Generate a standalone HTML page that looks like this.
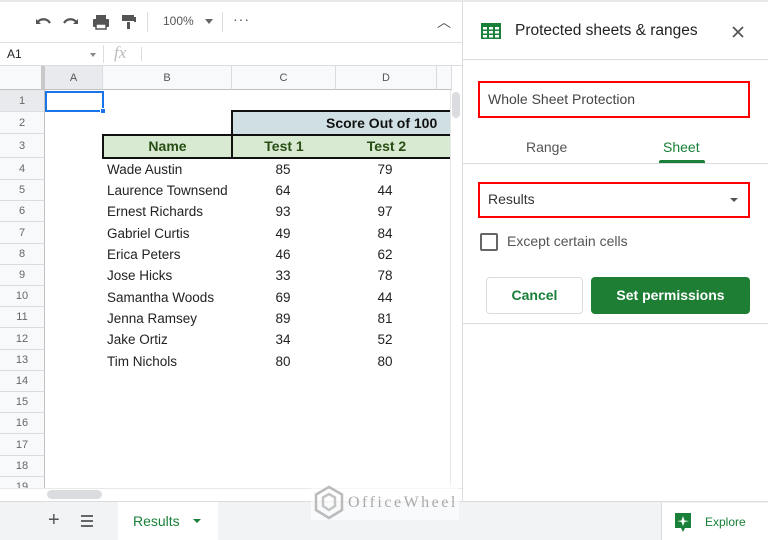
<!DOCTYPE html>
<html><head><style>
*{box-sizing:border-box;margin:0;padding:0}
body{width:768px;height:540px;overflow:hidden;background:#fff;font-family:"Liberation Sans",Arial,sans-serif;position:relative;color:#222}
.a{position:absolute}
.rh{position:absolute;left:0;width:45px;background:#f8f9fa;border-bottom:1px solid #dadce0;border-right:1px solid #c0c0c0;font-size:11px;color:#666;text-align:center}
.ch{position:absolute;top:66px;height:24px;border-right:1px solid #dadce0;border-bottom:1px solid #c0c0c0;background:#f8f9fa;font-size:11px;color:#555;text-align:center;line-height:24px}
.t{position:absolute;font-size:13.5px;color:#222}
.n{position:absolute;font-size:13.5px;width:60px;text-align:center}
</style></head><body>
<!-- toolbar -->
<div class="a" style="left:0;top:0;width:462px;height:43px;border-top:2px solid #e8e8e8;border-bottom:1px solid #e0e0e0"></div>
<svg class="a" style="left:34px;top:14px" width="110" height="16" viewBox="0 0 110 16">
<path d="M3 9 C6 4 13 4 16 9" stroke="#555" stroke-width="2.2" fill="none"/><path d="M2 5 L2 10 L7 10Z" fill="#555"/>
<path d="M30 9 C33 4 40 4 43 9" stroke="#555" stroke-width="2.2" fill="none"/><path d="M44 5 L44 10 L39 10Z" fill="#555"/>
<rect x="59" y="5" width="16" height="8" rx="1" fill="#555"/><rect x="62" y="1" width="10" height="4" fill="#555"/><rect x="62" y="10" width="10" height="5" fill="#fff" stroke="#555" stroke-width="1.5"/>
<rect x="88" y="1" width="12" height="6" fill="#555"/><rect x="100" y="3" width="2" height="5" fill="#555"/><rect x="93" y="8" width="3" height="7" fill="#555"/>
</svg>
<div class="a" style="left:147px;top:12px;width:1px;height:20px;background:#ddd"></div>
<div class="a" style="left:163px;top:14px;font-size:12px;color:#555">100%</div>
<div class="a" style="left:205px;top:19px;border:4px solid transparent;border-top:5px solid #666"></div>
<div class="a" style="left:222px;top:12px;width:1px;height:20px;background:#ddd"></div>
<div class="a" style="left:233px;top:11px;font-size:14px;color:#555;letter-spacing:1px">···</div>
<div class="a" style="left:437px;top:12px;font-size:14px;color:#555">︿</div>
<!-- formula bar -->
<div class="a" style="left:0;top:43px;width:462px;height:23px;border-bottom:1px solid #dadce0"></div>
<div class="a" style="left:7px;top:47px;font-size:12px;color:#222">A1</div>
<div class="a" style="left:90px;top:53px;border:3px solid transparent;border-top:4px solid #888"></div>
<div class="a" style="left:103px;top:45px;width:1px;height:18px;background:#ddd"></div>
<div class="a" style="left:114px;top:43px;font-size:17px;color:#bbb;font-style:italic;font-family:'Liberation Serif',serif">fx</div>
<div class="a" style="left:141px;top:47px;width:1px;height:14px;background:#ddd"></div>
<!-- column headers -->
<div class="ch" style="left:0;width:45px;border-right:4px solid #c8c8c8"></div>
<div class="ch" style="left:45px;width:58px;background:#e8eaed">A</div>
<div class="ch" style="left:103px;width:129px">B</div>
<div class="ch" style="left:232px;width:104px">C</div>
<div class="ch" style="left:336px;width:101px">D</div>
<div class="ch" style="left:437px;width:15px"></div>
<!-- row headers -->
<div class="rh" style="top:90px;height:22px;line-height:22px;background:#e8eaed">1</div>
<div class="rh" style="top:112px;height:22px;line-height:22px">2</div>
<div class="rh" style="top:134px;height:24px;line-height:24px">3</div>
<div class="rh" style="top:158px;height:22px;line-height:22px">4</div>
<div class="rh" style="top:180px;height:21px;line-height:21px">5</div>
<div class="rh" style="top:201px;height:21px;line-height:21px">6</div>
<div class="rh" style="top:222px;height:22px;line-height:22px">7</div>
<div class="rh" style="top:244px;height:21px;line-height:21px">8</div>
<div class="rh" style="top:265px;height:21px;line-height:21px">9</div>
<div class="rh" style="top:286px;height:21px;line-height:21px">10</div>
<div class="rh" style="top:307px;height:21px;line-height:21px">11</div>
<div class="rh" style="top:328px;height:22px;line-height:22px">12</div>
<div class="rh" style="top:350px;height:21px;line-height:21px">13</div>
<div class="rh" style="top:371px;height:21px;line-height:21px">14</div>
<div class="rh" style="top:392px;height:21px;line-height:21px">15</div>
<div class="rh" style="top:413px;height:21px;line-height:21px">16</div>
<div class="rh" style="top:434px;height:22px;line-height:22px">17</div>
<div class="rh" style="top:456px;height:21px;line-height:21px">18</div>
<div class="rh" style="top:477px;height:21px;line-height:21px">19</div>
<!-- selection A1 -->
<div class="a" style="left:45px;top:91px;width:59px;height:21px;border:2px solid #1a73e8"></div>
<div class="a" style="left:100px;top:108px;width:6px;height:6px;background:#1a73e8;border:1px solid #fff"></div>
<!-- table -->
<div class="a" style="left:231px;top:110px;width:222px;height:25px;background:#d0dfe3;border:2px solid #111;border-bottom:none;border-right:none"></div>
<div class="a" style="left:326px;top:115px;font-size:14px;font-weight:bold;color:#111">Score Out of 100</div>
<div class="a" style="left:102px;top:134px;width:350px;height:25px;background:#d9ead3;border:2px solid #111;border-right:none"></div>
<div class="a" style="left:231px;top:134px;width:2px;height:25px;background:#111"></div>
<div class="a" style="left:103px;top:138px;width:129px;text-align:center;font-size:14px;font-weight:bold;color:#274e13">Name</div>
<div class="a" style="left:232px;top:138px;width:104px;text-align:center;font-size:14px;font-weight:bold;color:#274e13">Test 1</div>
<div class="a" style="left:336px;top:138px;width:101px;text-align:center;font-size:14px;font-weight:bold;color:#274e13">Test 2</div>
<div class="t" style="left:107px;top:162px">Wade Austin</div><div class="n" style="left:253px;top:162px">85</div><div class="n" style="left:355px;top:162px">79</div>
<div class="t" style="left:107px;top:183px">Laurence Townsend</div><div class="n" style="left:253px;top:183px">64</div><div class="n" style="left:355px;top:183px">44</div>
<div class="t" style="left:107px;top:204px">Ernest Richards</div><div class="n" style="left:253px;top:204px">93</div><div class="n" style="left:355px;top:204px">97</div>
<div class="t" style="left:107px;top:226px">Gabriel Curtis</div><div class="n" style="left:253px;top:226px">49</div><div class="n" style="left:355px;top:226px">84</div>
<div class="t" style="left:107px;top:247px">Erica Peters</div><div class="n" style="left:253px;top:247px">46</div><div class="n" style="left:355px;top:247px">62</div>
<div class="t" style="left:107px;top:268px">Jose Hicks</div><div class="n" style="left:253px;top:268px">33</div><div class="n" style="left:355px;top:268px">78</div>
<div class="t" style="left:107px;top:290px">Samantha Woods</div><div class="n" style="left:253px;top:290px">69</div><div class="n" style="left:355px;top:290px">44</div>
<div class="t" style="left:107px;top:311px">Jenna Ramsey</div><div class="n" style="left:253px;top:311px">89</div><div class="n" style="left:355px;top:311px">81</div>
<div class="t" style="left:107px;top:332px">Jake Ortiz</div><div class="n" style="left:253px;top:332px">34</div><div class="n" style="left:355px;top:332px">52</div>
<div class="t" style="left:107px;top:354px">Tim Nichols</div><div class="n" style="left:253px;top:354px">80</div><div class="n" style="left:355px;top:354px">80</div>
<!-- scrollbars -->
<div class="a" style="left:450px;top:90px;width:12px;height:410px;background:#fff;border-left:1px solid #e8e8e8"></div>
<div class="a" style="left:452px;top:92px;width:8px;height:26px;border-radius:4px;background:#dadce0"></div>
<div class="a" style="left:0;top:488px;width:462px;height:13px;background:#fff;border-top:1px solid #e8e8e8"></div>
<div class="a" style="left:47px;top:490px;width:55px;height:9px;border-radius:5px;background:#dadce0"></div>
<!-- bottom bar -->
<div class="a" style="left:0;top:501px;width:768px;height:39px;background:#f1f3f4;border-top:1px solid #dadce0"></div>
<div class="a" style="left:48px;top:509px;font-size:20px;color:#555">+</div>
<div class="a" style="left:81px;top:515px;width:12px;height:12px;border-top:2px solid #666;border-bottom:2px solid #666"><div style="margin-top:3px;height:2px;background:#666"></div></div>
<div class="a" style="left:118px;top:502px;width:100px;height:38px;background:#fff"></div>
<div class="a" style="left:133px;top:513px;font-size:14px;color:#188038">Results</div>
<div class="a" style="left:193px;top:519px;border:4px solid transparent;border-top:4px solid #188038"></div>
<!-- watermark -->
<div class="a" style="left:311px;top:482px;width:148px;height:38px;background:rgba(255,255,255,0.6)"></div>
<svg class="a" style="left:313px;top:485px" width="32" height="35" viewBox="0 0 32 35"><path d="M16 2 L29 9.5 L29 25 L16 33 L3 25 L3 9.5Z" fill="none" stroke="#bbb" stroke-width="2.5"/><path d="M16 9 L22 12.5 L22 21 L16 25 L10 21 L10 12.5Z" fill="none" stroke="#c4c4c4" stroke-width="2.5"/></svg>
<div class="a" style="left:348px;top:494px;font-family:'Liberation Serif',serif;font-size:16px;color:#aaa;letter-spacing:2.5px">OfficeWheel</div>
<div class="a" style="left:661px;top:503px;width:107px;height:37px;background:#fff;border-left:1px solid #dadce0"></div>
<svg class="a" style="left:673px;top:511px" width="20" height="22"><path d="M2 2 H18 V17 H12 L10 21 L8 17 H2Z" fill="#188038"/><path d="M10 5 L11.5 9.5 L16 10 L11.5 11 L10 15 L8.5 11 L4 10 L8.5 9.5Z" fill="#fff"/></svg>
<div class="a" style="left:705px;top:515px;font-size:12px;color:#188038">Explore</div>
<!-- side panel -->
<div class="a" style="left:462px;top:0;width:306px;height:501px;background:#fff;border-left:1px solid #dadce0;border-top:2px solid #e8e8e8"></div>
<svg class="a" style="left:481px;top:23px" width="20" height="16"><rect x="0" y="0" width="20" height="16" fill="#188038"/><g fill="#fff"><rect x="2" y="4" width="4" height="2.5"/><rect x="8" y="4" width="4" height="2.5"/><rect x="14" y="4" width="4" height="2.5"/><rect x="2" y="8" width="4" height="2.5"/><rect x="8" y="8" width="4" height="2.5"/><rect x="14" y="8" width="4" height="2.5"/><rect x="2" y="12" width="4" height="2.5"/><rect x="8" y="12" width="4" height="2.5"/><rect x="14" y="12" width="4" height="2.5"/></g></svg>
<div class="a" style="left:515px;top:22px;font-size:15.5px;color:#222">Protected sheets &amp; ranges</div>
<svg class="a" style="left:732px;top:26px" width="12" height="12"><path d="M1 1 L11 11 M11 1 L1 11" stroke="#555" stroke-width="1.8"/></svg>
<div class="a" style="left:463px;top:59px;width:305px;height:1px;background:#dadce0"></div>
<div class="a" style="left:478px;top:81px;width:272px;height:37px;border:2px solid #f00"></div>
<div class="a" style="left:488px;top:91px;font-size:14px;color:#444">Whole Sheet Protection</div>
<div class="a" style="left:526px;top:139px;font-size:14px;color:#555">Range</div>
<div class="a" style="left:663px;top:139px;font-size:14px;color:#188038">Sheet</div>
<div class="a" style="left:659px;top:160px;width:46px;height:3px;background:#188038;border-radius:2px 2px 0 0"></div>
<div class="a" style="left:463px;top:163px;width:305px;height:1px;background:#dadce0"></div>
<div class="a" style="left:478px;top:182px;width:272px;height:36px;border:2px solid #f00"></div>
<div class="a" style="left:488px;top:191px;font-size:14px;color:#333">Results</div>
<div class="a" style="left:730px;top:198px;border:4px solid transparent;border-top:4px solid #555"></div>
<div class="a" style="left:480px;top:233px;width:18px;height:18px;border:2px solid #666;border-radius:2px"></div>
<div class="a" style="left:507px;top:233px;font-size:14px;color:#555">Except certain cells</div>
<div class="a" style="left:486px;top:277px;width:97px;height:37px;border:1px solid #dadce0;border-radius:4px;text-align:center;line-height:35px;font-size:14px;font-weight:bold;color:#188038">Cancel</div>
<div class="a" style="left:591px;top:277px;width:159px;height:37px;background:#1e7e34;border-radius:4px;text-align:center;line-height:37px;font-size:14px;font-weight:bold;color:#fff">Set permissions</div>
<div class="a" style="left:463px;top:323px;width:305px;height:1px;background:#dadce0"></div>
</body></html>
